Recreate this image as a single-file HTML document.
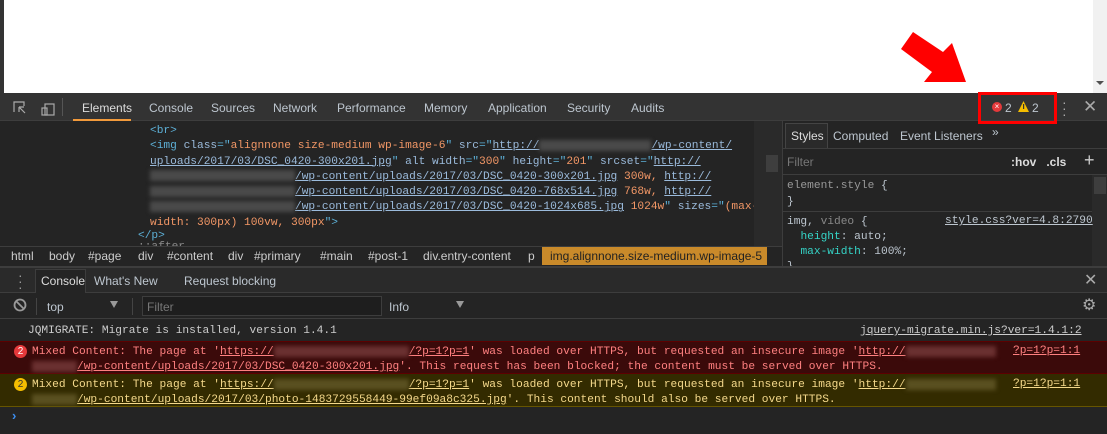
<!DOCTYPE html>
<html><head><meta charset="utf-8"><style>
*{margin:0;padding:0;box-sizing:border-box}
body{width:1107px;height:434px;overflow:hidden;background:#242424;position:relative;font-family:"Liberation Sans",sans-serif;font-size:12px;color:#bdc6cf}
.a{position:absolute;white-space:nowrap}
.m{font-family:"Liberation Mono",monospace;font-size:11.2px}
.tag{color:#5db0d7}.an{color:#9bbbdc}.av{color:#f29766}.u{text-decoration:underline}
.blur{display:inline-block;height:11px;background:#4a4a4a;filter:blur(2px);vertical-align:middle}
.bc{position:absolute;top:249px;color:#ccc;white-space:nowrap}
</style></head><body>
<div class="a" style="left:0;top:0;width:1107px;height:93px;background:#fff"></div>
<div class="a" style="left:1093px;top:0;width:14px;height:93px;background:#f1f1f1"></div>
<div class="a" style="left:1096px;top:81px;width:0;height:0;border-left:4px solid transparent;border-right:4px solid transparent;border-top:4px solid #505050"></div>
<div class="a" style="left:0;top:0;width:4px;height:93px;background:#333"></div>
<svg class="a" style="left:0;top:0" width="1107" height="93"><polygon points="913,32 943,52 952,43 966,82 924,82 932,72 901,49" fill="#f00"/></svg>
<!-- toolbar -->
<div class="a" style="left:0;top:93px;width:1107px;height:28px;background:#333;border-bottom:1px solid #3d3d3d"></div>
<svg class="a" style="left:12px;top:100px" width="44" height="16" fill="none" stroke="#aaa" stroke-width="1.2"><path d="M2 12V2h10v4"/><path d="M7 7l6 6M7 7v5M7 7h5" /><rect x="33" y="4" width="9" height="11"/><rect x="30" y="8" width="5" height="7"/></svg>
<div class="a" style="left:62px;top:98px;width:1px;height:18px;background:#555"></div>
<div class="a" style="left:82px;top:101px;color:#ddd">Elements</div>
<div class="a" style="left:73px;top:119px;width:58px;height:2px;background:#f29a3b"></div>
<div class="a" style="left:149px;top:101px">Console</div>
<div class="a" style="left:211px;top:101px">Sources</div>
<div class="a" style="left:273px;top:101px">Network</div>
<div class="a" style="left:337px;top:101px">Performance</div>
<div class="a" style="left:424px;top:101px">Memory</div>
<div class="a" style="left:488px;top:101px">Application</div>
<div class="a" style="left:567px;top:101px">Security</div>
<div class="a" style="left:631px;top:101px">Audits</div>
<div class="a" style="left:978px;top:92px;width:79px;height:32px;border:3px solid #f00"></div>
<div class="a" style="left:992px;top:102px;width:10px;height:10px;border-radius:50%;background:#e5393b;color:#fff;font-size:8px;line-height:10px;text-align:center">×</div>
<div class="a" style="left:1005px;top:101px">2</div>
<svg class="a" style="left:1018px;top:101px" width="11" height="11"><polygon points="5.5,0 11,11 0,11" fill="#f4bd00"/><rect x="5" y="3" width="1.2" height="5" fill="#333"/></svg>
<div class="a" style="left:1032px;top:101px">2</div>
<div class="a" style="left:1062px;top:99px;color:#aaa;font-size:14px;line-height:6px;width:4px">·<br>·<br>·</div>
<div class="a" style="left:1083px;top:97px;color:#aaa;font-size:17px">✕</div>
<!-- elements -->
<div class="a m" style="left:150px;top:124px;line-height:15.3px">
<span class="tag">&lt;br&gt;</span><br>
<span class="tag">&lt;img </span><span class="an">class</span><span class="tag">="</span><span class="av">alignnone size-medium wp-image-6</span><span class="tag">" </span><span class="an">src</span><span class="tag">="</span><span class="u an">http://<span class="blur" style="width:112px"></span>/wp-content/</span><br>
<span class="u an">uploads/2017/03/DSC_0420-300x201.jpg</span><span class="tag">" </span><span class="an">alt width</span><span class="tag">="</span><span class="av">300</span><span class="tag">" </span><span class="an">height</span><span class="tag">="</span><span class="av">201</span><span class="tag">" </span><span class="an">srcset</span><span class="tag">="</span><span class="u an">http://</span><br>
<span class="blur" style="width:145px"></span><span class="u an">/wp-content/uploads/2017/03/DSC_0420-300x201.jpg</span> <span class="av">300w, </span><span class="u an">http://</span><br>
<span class="blur" style="width:145px"></span><span class="u an">/wp-content/uploads/2017/03/DSC_0420-768x514.jpg</span> <span class="av">768w, </span><span class="u an">http://</span><br>
<span class="blur" style="width:145px"></span><span class="u an">/wp-content/uploads/2017/03/DSC_0420-1024x685.jpg</span> <span class="av">1024w</span><span class="tag">" </span><span class="an">sizes</span><span class="tag">="</span><span class="av">(max-</span><br>
<span class="av">width: 300px) 100vw, 300px</span><span class="tag">"&gt;</span></div>
<div class="a m tag" style="left:138px;top:230px">&lt;/p&gt;</div>
<div class="a m" style="left:138px;top:241px;height:5px;overflow:hidden;color:#888">::after</div>
<div class="a" style="left:754px;top:121px;width:28px;height:126px;background:#2a2a2a"></div>
<div class="a" style="left:766px;top:155px;width:12px;height:17px;background:#3e3e3e"></div>
<!-- breadcrumb -->
<div class="a" style="left:0;top:246px;width:783px;height:20px;background:#242424;border-top:1px solid #3d3d3d"></div>
<span class="bc" style="left:11px">html</span><span class="bc" style="left:49px">body</span><span class="bc" style="left:88px">#page</span><span class="bc" style="left:138px">div</span><span class="bc" style="left:167px">#content</span><span class="bc" style="left:228px">div</span><span class="bc" style="left:254px">#primary</span><span class="bc" style="left:320px">#main</span><span class="bc" style="left:368px">#post-1</span><span class="bc" style="left:423px">div.entry-content</span><span class="bc" style="left:528px">p</span>
<div class="a" style="left:542px;top:247px;width:225px;height:18px;background:#c98a2a;color:#222;padding:2px 0 0 8px">img.alignnone.size-medium.wp-image-5</div>
<!-- styles pane -->
<div class="a" style="left:782px;top:121px;width:1px;height:145px;background:#3d3d3d"></div>
<div class="a" style="left:783px;top:121px;width:324px;height:28px;border-bottom:1px solid #3d3d3d"></div>
<div class="a" style="left:785px;top:123px;width:43px;height:25px;border:1px solid #444;border-bottom:none;background:#2a2a2a"></div>
<div class="a" style="left:791px;top:129px;color:#ddd">Styles</div>
<div class="a" style="left:833px;top:129px">Computed</div>
<div class="a" style="left:900px;top:129px">Event Listeners</div>
<div class="a" style="left:992px;top:125px">»</div>
<div class="a" style="left:787px;top:155px;color:#777">Filter</div>
<div class="a" style="left:1011px;top:155px;color:#ddd;font-weight:bold">:hov&nbsp;&nbsp; .cls</div>
<div class="a" style="left:1084px;top:150px;color:#ccc;font-size:18px">+</div>
<div class="a" style="left:783px;top:174px;width:324px;height:1px;background:#3d3d3d"></div>
<div class="a" style="left:1092px;top:175px;width:15px;height:91px;background:#2a2a2a"></div>
<div class="a" style="left:1094px;top:177px;width:12px;height:17px;background:#3e3e3e"></div>
<div class="a m" style="left:787px;top:178px;line-height:16px"><span style="color:#999">element.style</span> {<br>}</div>
<div class="a" style="left:783px;top:211px;width:309px;height:1px;background:#3d3d3d"></div>
<div class="a m" style="left:787px;top:215px;line-height:15px">img, <span style="color:#888">video</span> {<br>&nbsp;&nbsp;<span style="color:#35d4c7">height</span>: auto;<br>&nbsp;&nbsp;<span style="color:#35d4c7">max-width</span>: 100%;<br>}</div>
<div class="a m u" style="left:945px;top:215px">style.css?ver=4.8:2790</div>
<!-- drawer -->
<div class="a" style="left:0;top:266px;width:1107px;height:2px;background:#3d3d3d"></div>
<div class="a" style="left:0;top:268px;width:1107px;height:25px;background:#2a2a2a;border-bottom:1px solid #3d3d3d"></div>
<div class="a" style="left:18px;top:272px;color:#999;font-size:14px;line-height:6px;width:4px">·<br>·<br>·</div>
<div class="a" style="left:35px;top:269px;width:51px;height:24px;background:#242424;border:1px solid #3d3d3d;border-bottom:none"></div>
<div class="a" style="left:41px;top:274px;color:#ddd">Console</div>
<div class="a" style="left:94px;top:274px">What's New</div>
<div class="a" style="left:184px;top:274px">Request blocking</div>
<div class="a" style="left:1084px;top:270px;color:#aaa;font-size:16px">✕</div>
<div class="a" style="left:0;top:293px;width:1107px;height:26px;border-bottom:1px solid #3d3d3d"></div>
<svg class="a" style="left:13px;top:298px" width="14" height="14" fill="none" stroke="#999" stroke-width="1.8"><circle cx="7" cy="7" r="5.5"/><path d="M3 3l8 8"/></svg>
<div class="a" style="left:36px;top:298px;width:1px;height:17px;background:#444"></div>
<div class="a" style="left:47px;top:300px">top</div>
<div class="a" style="left:110px;top:301px;border-left:4px solid transparent;border-right:4px solid transparent;border-top:7px solid #999"></div>
<div class="a" style="left:132px;top:298px;width:1px;height:17px;background:#444"></div>
<div class="a" style="left:142px;top:296px;width:240px;height:20px;border:1px solid #3d3d3d;background:#1e1e1e;color:#777;padding:3px 0 0 4px">Filter</div>
<div class="a" style="left:389px;top:300px">Info</div>
<div class="a" style="left:456px;top:301px;border-left:4px solid transparent;border-right:4px solid transparent;border-top:7px solid #999"></div>
<div class="a" style="left:1082px;top:295px;color:#aaa;font-size:16px">⚙</div>
<div class="a m" style="left:28px;top:325px;color:#ccc">JQMIGRATE: Migrate is installed, version 1.4.1</div>
<div class="a m u" style="left:860px;top:325px;color:#ccc">jquery-migrate.min.js?ver=1.4.1:2</div>
<div class="a" style="left:0;top:341px;width:1107px;height:33px;background:#3b0a0a;border-top:1px solid #5c0000;border-bottom:1px solid #5c0000"></div>
<div class="a" style="left:14px;top:345px;width:13px;height:13px;border-radius:50%;background:#e5393b;color:#fff;font-size:10px;text-align:center;line-height:13px">2</div>
<div class="a m" style="left:32px;top:345px;line-height:15px;color:#ff8080">Mixed Content: The page at '<span class="u">https://<span class="blur" style="width:135px;background:#6a3030"></span>/?p=1?p=1</span>' was loaded over HTTPS, but requested an insecure image '<span class="u">http://<span class="blur" style="width:90px;background:#6a3030"></span></span><br><span class="blur" style="width:45px;background:#6a3030"></span><span class="u">/wp-content/uploads/2017/03/DSC_0420-300x201.jpg</span>'. This request has been blocked; the content must be served over HTTPS.</div>
<div class="a m u" style="left:1013px;top:345px;color:#ff8080;background:#3b0a0a">?p=1?p=1:1</div>
<div class="a" style="left:0;top:374px;width:1107px;height:33px;background:#332b00;border-bottom:1px solid #665500"></div>
<div class="a" style="left:14px;top:378px;width:13px;height:13px;border-radius:50%;background:#f4bd00;color:#333;font-size:10px;text-align:center;line-height:13px">2</div>
<div class="a m" style="left:32px;top:378px;line-height:15px;color:#f5d98b">Mixed Content: The page at '<span class="u">https://<span class="blur" style="width:135px;background:#5a5020"></span>/?p=1?p=1</span>' was loaded over HTTPS, but requested an insecure image '<span class="u">http://<span class="blur" style="width:90px;background:#5a5020"></span></span><br><span class="blur" style="width:45px;background:#5a5020"></span><span class="u">/wp-content/uploads/2017/03/photo-1483729558449-99ef09a8c325.jpg</span>'. This content should also be served over HTTPS.</div>
<div class="a m u" style="left:1013px;top:378px;color:#f5d98b;background:#332b00">?p=1?p=1:1</div>
<div class="a" style="left:12px;top:408px;color:#3d8ff0;font-size:13px;font-weight:bold">›</div>
</body></html>
